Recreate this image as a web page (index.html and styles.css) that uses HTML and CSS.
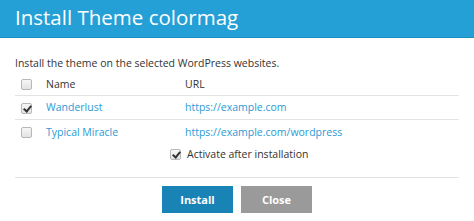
FILE: index.html
```html
<!DOCTYPE html>
<html>
<head>
<meta charset="utf-8">
<link rel="stylesheet" href="styles.css">
</head>
<body>
<div class="dialog">
  <div class="header"><h1 class="title">Install Theme colormag</h1></div>
  <div class="body">
    <p class="desc">Install the theme on the selected WordPress websites.</p>
    <table class="sites">
      <thead>
        <tr><th class="c-check"><span class="cb"></span></th><th class="c-name">Name</th><th class="c-url">URL</th></tr>
      </thead>
      <tbody>
        <tr><td class="c-check"><span class="cb checked"></span></td><td class="c-name"><a class="link">Wanderlust</a></td><td class="c-url"><a class="link">https://example.com</a></td></tr>
        <tr class="last"><td class="c-check"><span class="cb"></span></td><td class="c-name"><a class="link">Typical Miracle</a></td><td class="c-url"><a class="link">https://example.com/wordpress</a></td></tr>
      </tbody>
    </table>
    <div class="activate"><span class="cb checked small"></span><span>Activate after installation</span></div>
  </div>
  <div class="footer">
    <button class="btn primary">Install</button>
    <button class="btn secondary">Close</button>
  </div>
</div>
</body>
</html>
```
FILE: styles.css
```css
* { box-sizing: border-box; }
html, body { margin: 0; padding: 0; background: #fff; }
body { font-family: "Open Sans", "Liberation Sans", sans-serif; color: #333; width: 474px; height: 221px; overflow: hidden; }
.dialog { width: 474px; }
.header { background: #24a0d6; height: 38px; border-bottom: 1px solid #1c8fc2; display: flex; align-items: center; padding-left: 15px; }
.title { margin: 0; font-size: 20.5px; font-weight: 400; color: #fff; line-height: 1; position: relative; top: -1px; }
.body { padding: 0 15px; }
.desc { margin: 0; padding-top: 18px; font-size: 10.5px; line-height: 14px; color: #333; }
.sites { width: 444px; border-collapse: collapse; margin-top: 3px; font-size: 10.5px; }
.sites th, .sites td { text-align: left; font-weight: 400; padding: 0; height: 24px; vertical-align: middle; border-bottom: 1px solid #e3e3e3; }
.sites thead th { height: 22px; }
.sites tr.last td { border-bottom: none; height: 25px; }
.c-check { width: 31px; padding-left: 6px !important; }
.c-name { width: 139px; }
.link { color: #2b9ad6; text-decoration: none; }
.cb { display: inline-block; width: 11px; height: 11px; border: 1px solid #b8b8b8; border-radius: 2px; background: linear-gradient(#f7f7f7, #e2e2e2); vertical-align: middle; position: relative; }
.cb.checked::after { content: ""; position: absolute; left: 3px; top: 0px; width: 3px; height: 6px; border: solid #333; border-width: 0 2px 2px 0; transform: rotate(40deg); }
.activate { display: flex; align-items: center; gap: 6px; padding-left: 155px; margin-top: 1px; font-size: 10.5px; height: 18px; }
.footer { margin: 14px 15px 0; border-top: 1px solid #e3e3e3; padding-top: 8px; display: flex; justify-content: center; gap: 8px; }
.btn { font-family: "Open Sans", "Liberation Sans", sans-serif; font-size: 11px; font-weight: 700; color: #fff; border: none; width: 71px; height: 27px; padding: 0; }
.primary { background: #1a83b6; }
.secondary { background: #9a9a9a; }
```
